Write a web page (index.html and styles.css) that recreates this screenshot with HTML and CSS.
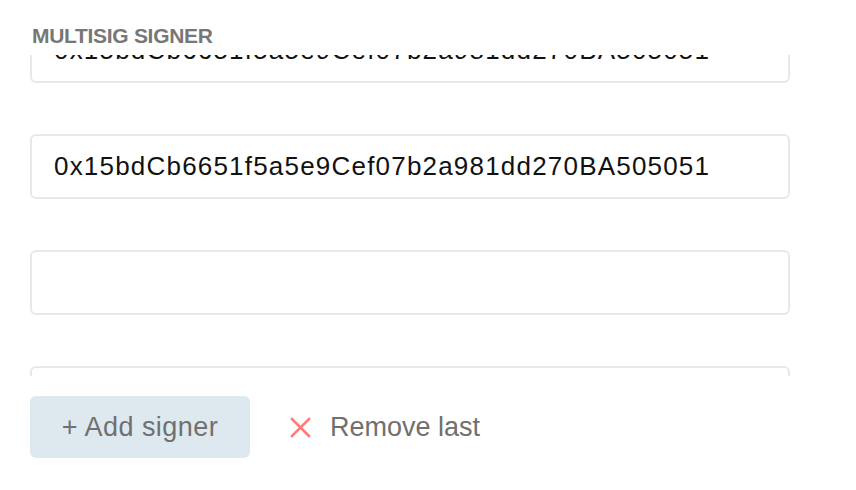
FILE: index.html
```html
<!DOCTYPE html>
<html lang="en">
  <head>
    <meta charset="UTF-8" />
    <meta name="viewport" content="width=device-width, initial-scale=1.0" />
    <title>Multisig Signer</title>
    <link rel="stylesheet" href="styles.css">
  </head>
  <body>
    <div class="field">
      <label class="field-label">MULTISIG SIGNER</label>

      <div class="signers">
        <div class="signer-list">
          <input class="signer" type="text" value="0x15bdCb6651f5a5e9Cef07b2a981dd270BA505051" />
          <input class="signer" type="text" value="0x15bdCb6651f5a5e9Cef07b2a981dd270BA505051" />
          <input class="signer" type="text" value="" />
          <input class="signer" type="text" value="" />
        </div>
      </div>

      <div class="actions">
        <button class="add-btn">+ Add signer</button>
        <button class="remove-btn">
          <svg class="remove-icon" width="21" height="21" viewBox="0 0 21 21">
            <path d="M2 2 L19 19 M19 2 L2 19" stroke="#ff7b7b" stroke-width="2.6" stroke-linecap="square" fill="none" />
          </svg>
          Remove last
        </button>
      </div>
    </div>
  </body>
</html>
```

FILE: styles.css
```css
body {
  margin: 0;
  font-family: "Liberation Sans", Arial, sans-serif;
  background: #fff;
}
.field {
  width: 760px;
  padding: 24px 0 0 30px;
}
.field-label {
  display: block;
  padding-left: 2px;
  font-size: 21px;
  line-height: 24px;
  font-weight: bold;
  color: #777;
  letter-spacing: -0.3px;
  height: 31px;
}
.signers {
  height: 321px;
  overflow: hidden;
}
.signer-list {
  margin-top: -37px;
}
.signer {
  display: block;
  box-sizing: border-box;
  width: 760px;
  height: 65px;
  margin: 0 0 51px 0;
  padding: 0 22px;
  border: 2px solid #e8e8e8;
  border-radius: 6px;
  font-family: "Liberation Sans", Arial, sans-serif;
  font-size: 26px;
  letter-spacing: 1.2px;
  color: #111;
  outline: none;
}
.actions {
  display: flex;
  align-items: center;
  gap: 40px;
  margin-top: 20px;
}
.add-btn {
  width: 220px;
  height: 62px;
  border: none;
  border-radius: 6px;
  background: #dde9ef;
  color: #707070;
  font-family: "Liberation Sans", Arial, sans-serif;
  font-size: 27px;
  letter-spacing: 0.45px;
  cursor: pointer;
}
.remove-btn {
  display: flex;
  align-items: center;
  gap: 19px;
  padding: 0;
  border: none;
  background: none;
  color: #707070;
  font-family: "Liberation Sans", Arial, sans-serif;
  font-size: 27px;
  cursor: pointer;
}
```
